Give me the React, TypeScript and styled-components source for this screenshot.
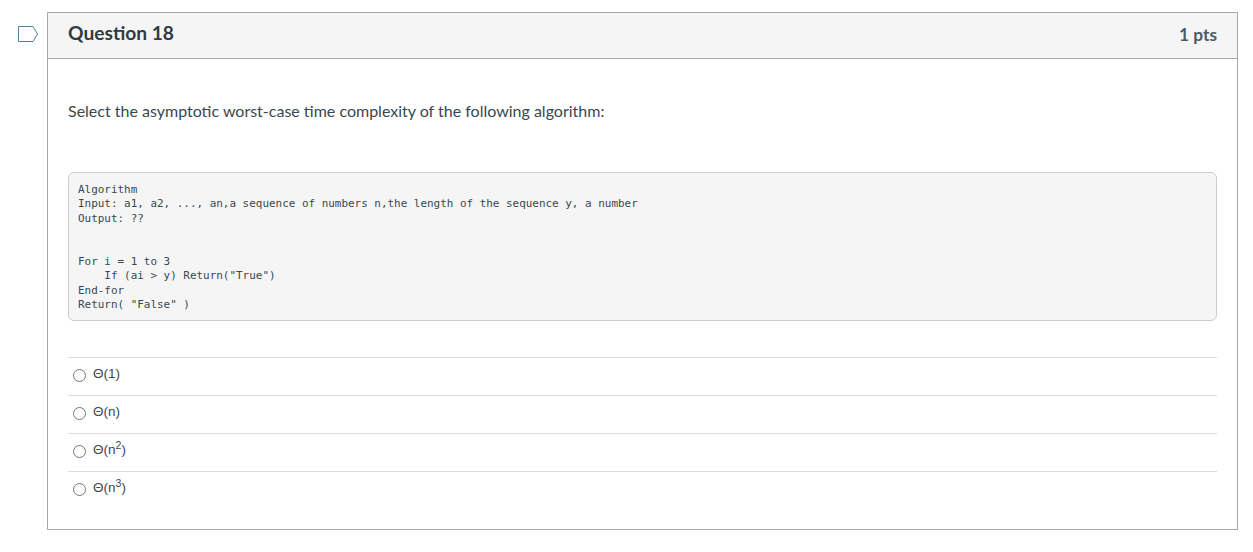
import React from "react";
import styled, { createGlobalStyle } from "styled-components";

const GlobalStyle = createGlobalStyle`
  html, body {
    margin: 0;
    padding: 0;
    background: #ffffff;
  }
`;

const answers = [
  { id: "a", base: "(1)" },
  { id: "b", base: "(n)" },
  { id: "c", base: "(n", sup: "2" },
  { id: "d", base: "(n", sup: "3" },
];

const codeText = `Algorithm
Input: a1, a2, ..., an,a sequence of numbers n,the length of the sequence y, a number
Output: ??


For i = 1 to 3
    If (ai > y) Return("True")
End-for
Return( "False" )`;

const App = () => {
  return (
    <Page>
      <GlobalStyle />
      <FlagColumn>
        <svg width="22" height="16" viewBox="0 0 22 16" fill="none">
          <path d="M1.5 0.5H16L20.5 8L16 15.5H1.5Z" stroke="#4f83a3" strokeWidth="1" />
        </svg>
      </FlagColumn>
      <QuestionCard>
        <CardHeader>
          <QuestionTitle>Question 18</QuestionTitle>
          <Points>1 pts</Points>
        </CardHeader>
        <CardBody>
          <Prompt>Select the asymptotic worst-case time complexity of the following algorithm:</Prompt>
          <CodeBlock>{codeText}</CodeBlock>
          <AnswerList>
            {answers.map((a) => (
              <AnswerRow key={a.id}>
                <Radio />
                <AnswerText>
                  Θ{a.base}
                  {a.sup && <sup>{a.sup}</sup>}
                  {a.sup && ")"}
                </AnswerText>
              </AnswerRow>
            ))}
          </AnswerList>
        </CardBody>
      </QuestionCard>
    </Page>
  );
};

const Page = styled.div`
  display: flex;
  width: 1253px;
  height: 552px;
  padding: 12px 15px 0 17px;
  box-sizing: border-box;
  overflow: hidden;
`;
const FlagColumn = styled.div`
  width: 30px;
  flex-shrink: 0;
  padding-top: 14px;
  line-height: 0;
`;
const QuestionCard = styled.section`
  width: 1191px;
  height: 518px;
  box-sizing: border-box;
  border: 1px solid #a8a8a8;
  font-family: Lato, "Open Sans", sans-serif;
  color: #2d3b45;
`;
const CardHeader = styled.header`
  height: 46px;
  box-sizing: border-box;
  background: #f5f5f5;
  border-bottom: 1px solid #a8a8a8;
  padding: 0 20px 3px;
  display: flex;
  justify-content: space-between;
  align-items: center;
`;
const QuestionTitle = styled.h2`
  margin: 0 0 4px;
  font-size: 19.2px;
  font-weight: 700;
`;
const Points = styled.div`
  font-size: 17.3px;
  font-weight: 700;
  color: #4d5a63;
`;
const CardBody = styled.div`
  padding: 41px 20px 0;
`;
const Prompt = styled.p`
  margin: 0;
  font-size: 16px;
  line-height: 22px;
  color: #3a4750;
`;
const CodeBlock = styled.pre`
  margin: 50px 0 0;
  height: 149px;
  box-sizing: border-box;
  padding: 10px 9px 0;
  background: #f5f5f5;
  border: 1px solid #c7cdd1;
  border-radius: 6px;
  font-family: "DejaVu Sans Mono", "Liberation Mono", monospace;
  font-size: 10.94px;
  line-height: 14.4px;
  color: #3a4750;
`;
const AnswerList = styled.div`
  margin-top: 36px;
`;
const AnswerRow = styled.div`
  height: 38px;
  box-sizing: border-box;
  border-top: 1px solid #dcdcdc;
  padding: 0 0 4px 5px;
  display: flex;
  align-items: center;
`;
const Radio = styled.span`
  width: 13px;
  height: 13px;
  box-sizing: border-box;
  border: 1px solid #767676;
  border-radius: 50%;
  margin-top: 2px;
  flex-shrink: 0;
`;
const AnswerText = styled.span`
  margin-left: 7px;
  margin-top: -2px;
  font-family: "Liberation Sans", Arial, sans-serif;
  font-size: 13.5px;
  line-height: 18px;
  color: #3a4750;

  sup {
    font-size: 10.5px;
    line-height: 0;
    vertical-align: 5px;
  }
`;

export default App;
